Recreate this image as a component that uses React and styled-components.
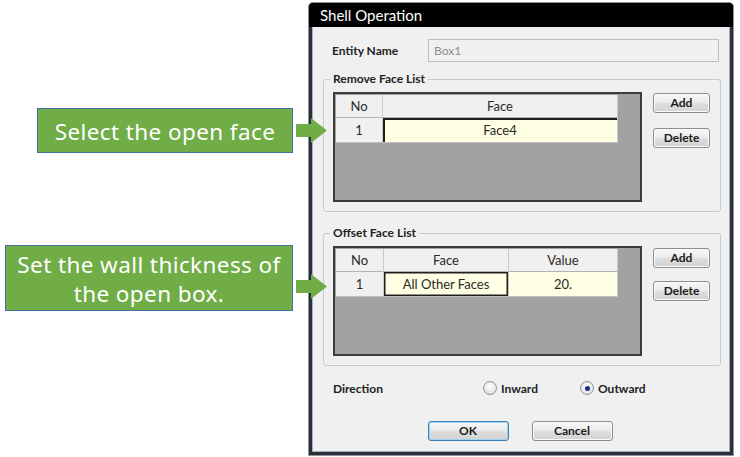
import React from "react";
import styled, { createGlobalStyle } from "styled-components";

const GlobalStyle = createGlobalStyle`
  html, body {
    margin: 0;
    padding: 0;
    background: #ffffff;
  }
  * {
    box-sizing: border-box;
  }
`;

const Page = styled.div`
  display: flex;
  width: 740px;
  height: 457px;
  overflow: hidden;
  background: #ffffff;
`;

// left side: green notes with arrows pointing at the dialog
const Notes = styled.div`
  position: relative;
  z-index: 2;
  width: 308px;
  flex: none;
  display: flex;
  flex-direction: column;
`;

const NoteRow = styled.div`
  display: flex;
  align-items: flex-start;
  gap: 3px;
  margin-top: ${p => p.$top}px;
  margin-left: ${p => p.$left}px;
`;

const NoteBox = styled.div`
  width: ${p => p.$w}px;
  height: ${p => p.$h}px;
  flex: none;
  display: flex;
  align-items: center;
  justify-content: center;
  text-align: center;
  background: #70ad47;
  border: 1px solid #41719c;
  color: #ffffff;
  font-family: "Noto Sans", "Open Sans", sans-serif;
  font-size: 22.5px;
  line-height: 29px;
  letter-spacing: 0.4px;
  padding-top: 1px;
`;

const ArrowSvg = styled.svg`
  flex: none;
  margin-top: ${p => p.$offset}px;
`;

const Arrow = ({ offset }) => (
  <ArrowSvg $offset={offset} width="31" height="25" viewBox="0 0 31 25">
    <polygon points="0,6 15,6 15,0 31,12.5 15,25 15,19 0,19" fill="#70ad47" />
  </ArrowSvg>
);

// dialog window
const Window = styled.div`
  margin-top: 2px;
  width: 426px;
  height: 454px;
  flex: none;
  display: flex;
  flex-direction: column;
  border: 1px solid #8d919b;
  border-radius: 5px 5px 0 0;
  background: #2b2f3b;
  padding: 0 3px 3px;
`;

const TitleBar = styled.div`
  height: 24px;
  margin: 0 -3px;
  padding-left: 11px;
  background: #000000;
  border-radius: 4px 4px 0 0;
  color: #ffffff;
  font-family: Lato, "Noto Sans", sans-serif;
  font-size: 15px;
  line-height: 25px;
`;

const Body = styled.div`
  flex: 1;
  display: flex;
  flex-direction: column;
  padding: 12px 10px 0 10px;
  background: #f0f0f0;
  border: 1px solid #a9aeb8;
  border-top: none;
  font-family: Lato, "Noto Sans", sans-serif;
  font-size: 12px;
  color: #1e1e1e;
`;

const FieldRow = styled.div`
  display: flex;
  align-items: center;
  height: 23px;
`;

const Label = styled.div`
  width: ${p => p.$w}px;
  margin-left: ${p => p.$indent}px;
  font-weight: 700;
  color: #222;
`;

const TextInput = styled.div`
  width: 294px;
  height: 23px;
  border: 1px solid #b9bdc5;
  background: #f0f0f0;
  color: #8e8e8e;
  padding-left: 5px;
  line-height: 21px;
  font-size: 12px;
`;

const Group = styled.fieldset`
  width: 398px;
  margin: ${p => p.$top}px 0 0 0;
  padding: 5px 10px 9px 9px;
  border: 1px solid #c3cbd3;
  border-radius: 3px;
  display: flex;
  gap: 11px;
  min-width: 0;
`;

const Legend = styled.legend`
  padding: 0 3px;
  margin-left: -3px;
  font-weight: 700;
  font-size: 12px;
  line-height: 16px;
  color: #222;
`;

const Table = styled.div`
  width: 309px;
  height: 110px;
  flex: none;
  border: 2px solid #3c3c3c;
  background: #a2a2a2;
  padding: 1px;
`;

const Grid = styled.div`
  display: grid;
  grid-template-columns: ${p => p.$cols};
  grid-auto-rows: auto;
  width: 282px;
`;

const HeadCell = styled.div`
  height: 23px;
  display: flex;
  align-items: center;
  justify-content: center;
  background: #f0f0f0;
  border-right: 1px solid #cacaca;
  border-bottom: 1px solid #b3b3b3;
  font-size: 13px;
  color: #2a2a2a;
`;

const Cell = styled.div`
  height: 25px;
  display: flex;
  align-items: center;
  justify-content: center;
  background: ${p => (p.$edit ? "#ffffe3" : "#f0f0f0")};
  border-right: 1px solid #cacaca;
  border-bottom: 1px solid #c0c0c0;
  box-shadow: ${p =>
    p.$focus === "full"
      ? "inset 0 0 0 1.5px #1e1e1e"
      : p.$focus === "corner"
      ? "inset 2px 2px 0 0 #1e1e1e"
      : "none"};
  font-size: 13px;
  color: #2a2a2a;
  padding-bottom: 1px;
`;

const SideButtons = styled.div`
  display: flex;
  flex-direction: column;
  gap: ${p => p.$gap}px;
  padding-top: ${p => p.$top}px;
`;

const Button = styled.button`
  width: ${p => p.$w}px;
  height: 20px;
  padding: 0;
  border: 1px solid ${p => (p.$default ? "#3c7fb1" : "#8b8d8f")};
  border-radius: 3px;
  background: linear-gradient(#f7f7f7 0%, #ececec 45%, #dcdcdc 55%, #d4d4d4 100%);
  box-shadow: ${p =>
    p.$default ? "inset 0 0 0 1px #9fd3f3" : "inset 0 0 0 1px #fbfbfb"};
  font-family: Lato, "Noto Sans", sans-serif;
  font-weight: 700;
  font-size: 12px;
  color: #1c1c1c;
  line-height: 18px;
`;

const DirectionRow = styled.div`
  display: flex;
  align-items: center;
  height: 20px;
  margin-top: 12px;
`;

const RadioItem = styled.div`
  display: flex;
  align-items: center;
  gap: 4px;
  width: ${p => p.$w}px;
  font-weight: 700;
  color: #222;
`;

const RadioDot = styled.span`
  width: 14px;
  height: 14px;
  border-radius: 50%;
  border: 1px solid #8f949a;
  background: radial-gradient(circle at 50% 40%, #ffffff 0%, #e4e4e4 70%, #cfcfcf 100%);
  display: flex;
  align-items: center;
  justify-content: center;
  &::after {
    content: "";
    width: 5px;
    height: 5px;
    border-radius: 50%;
    background: ${p => (p.$checked ? "#1b2f8a" : "transparent")};
  }
`;

const Footer = styled.div`
  display: flex;
  justify-content: center;
  gap: 23px;
  margin-top: 23px;
  padding-right: 2px;
`;

export default function App() {
  return (
    <>
      <GlobalStyle />
      <Page>
        <Notes>
          <NoteRow $top={108} $left={37}>
            <NoteBox $w={256} $h={45}>Select the open face</NoteBox>
            <Arrow offset={10} />
          </NoteRow>
          <NoteRow $top={92} $left={5}>
            <NoteBox $w={288} $h={66}>
              Set the wall thickness of
              <br />
              the open box.
            </NoteBox>
            <Arrow offset={29} />
          </NoteRow>
        </Notes>

        <Window>
          <TitleBar>Shell Operation</TitleBar>
          <Body>
            <FieldRow>
              <Label $indent={9} $w={97}>Entity Name</Label>
              <TextInput>Box1</TextInput>
            </FieldRow>

            <Group $top={9}>
              <Legend>Remove Face List</Legend>
              <Table>
                <Grid $cols="47px 235px">
                  <HeadCell>No</HeadCell>
                  <HeadCell>Face</HeadCell>
                  <Cell>1</Cell>
                  <Cell $edit $focus="corner">Face4</Cell>
                </Grid>
              </Table>
              <SideButtons $gap={15} $top={1}>
                <Button $w={57}>Add</Button>
                <Button $w={57}>Delete</Button>
              </SideButtons>
            </Group>

            <Group $top={13}>
              <Legend>Offset Face List</Legend>
              <Table>
                <Grid $cols="48px 125px 109px">
                  <HeadCell>No</HeadCell>
                  <HeadCell>Face</HeadCell>
                  <HeadCell>Value</HeadCell>
                  <Cell>1</Cell>
                  <Cell $edit $focus="full">All Other Faces</Cell>
                  <Cell $edit>20.</Cell>
                </Grid>
              </Table>
              <SideButtons $gap={13} $top={2}>
                <Button $w={57}>Add</Button>
                <Button $w={57}>Delete</Button>
              </SideButtons>
            </Group>

            <DirectionRow>
              <Label $indent={10} $w={150}>Direction</Label>
              <RadioItem $w={97}>
                <RadioDot />
                Inward
              </RadioItem>
              <RadioItem $w={90}>
                <RadioDot $checked />
                Outward
              </RadioItem>
            </DirectionRow>

            <Footer>
              <Button $w={81} $default>OK</Button>
              <Button $w={81}>Cancel</Button>
            </Footer>
          </Body>
        </Window>
      </Page>
    </>
  );
}
